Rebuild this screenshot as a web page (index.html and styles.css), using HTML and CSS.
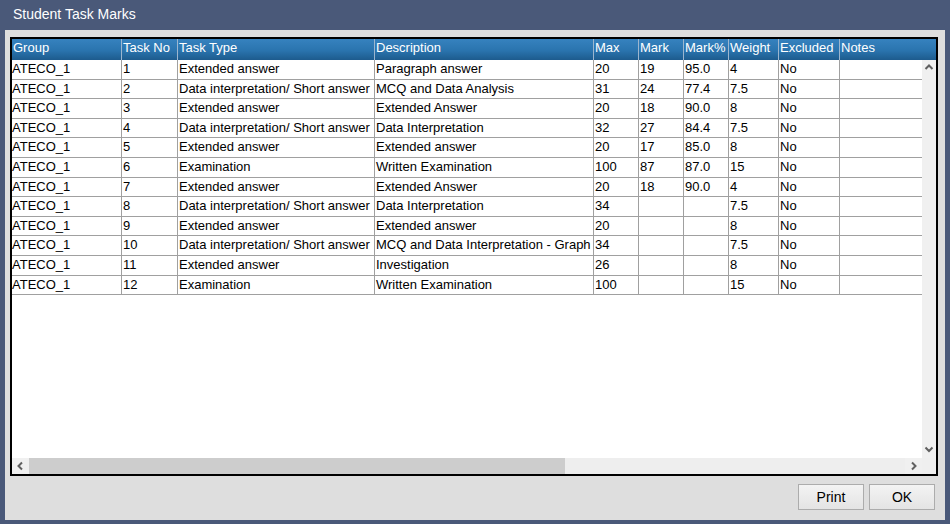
FILE: index.html
```html
<!DOCTYPE html>
<html lang="en">
<head>
    <meta charset="UTF-8" />
    <title>Student Task Marks</title>
    <link rel="stylesheet" href="styles.css">
</head>
<body>
    <div class="window">
        <div class="titlebar">Student Task Marks</div>

        <div class="client">
            <div class="gridFrame">
                <div class="gridHead">
                    <div class="hcell">Group</div>
                    <div class="hcell">Task No</div>
                    <div class="hcell">Task Type</div>
                    <div class="hcell">Description</div>
                    <div class="hcell">Max</div>
                    <div class="hcell">Mark</div>
                    <div class="hcell">Mark%</div>
                    <div class="hcell">Weight</div>
                    <div class="hcell">Excluded</div>
                    <div class="hcell">Notes</div>
                </div>

                <div class="gridBody">
                    <div class="rows">
                        <div class="row"><div class="cell">ATECO_1</div><div class="cell">1</div><div class="cell">Extended answer</div><div class="cell">Paragraph answer</div><div class="cell">20</div><div class="cell">19</div><div class="cell">95.0</div><div class="cell">4</div><div class="cell">No</div><div class="cell"></div></div>
                        <div class="row"><div class="cell">ATECO_1</div><div class="cell">2</div><div class="cell">Data interpretation/ Short answer</div><div class="cell">MCQ and Data Analysis</div><div class="cell">31</div><div class="cell">24</div><div class="cell">77.4</div><div class="cell">7.5</div><div class="cell">No</div><div class="cell"></div></div>
                        <div class="row"><div class="cell">ATECO_1</div><div class="cell">3</div><div class="cell">Extended answer</div><div class="cell">Extended Answer</div><div class="cell">20</div><div class="cell">18</div><div class="cell">90.0</div><div class="cell">8</div><div class="cell">No</div><div class="cell"></div></div>
                        <div class="row"><div class="cell">ATECO_1</div><div class="cell">4</div><div class="cell">Data interpretation/ Short answer</div><div class="cell">Data Interpretation</div><div class="cell">32</div><div class="cell">27</div><div class="cell">84.4</div><div class="cell">7.5</div><div class="cell">No</div><div class="cell"></div></div>
                        <div class="row"><div class="cell">ATECO_1</div><div class="cell">5</div><div class="cell">Extended answer</div><div class="cell">Extended answer</div><div class="cell">20</div><div class="cell">17</div><div class="cell">85.0</div><div class="cell">8</div><div class="cell">No</div><div class="cell"></div></div>
                        <div class="row"><div class="cell">ATECO_1</div><div class="cell">6</div><div class="cell">Examination</div><div class="cell">Written Examination</div><div class="cell">100</div><div class="cell">87</div><div class="cell">87.0</div><div class="cell">15</div><div class="cell">No</div><div class="cell"></div></div>
                        <div class="row"><div class="cell">ATECO_1</div><div class="cell">7</div><div class="cell">Extended answer</div><div class="cell">Extended Answer</div><div class="cell">20</div><div class="cell">18</div><div class="cell">90.0</div><div class="cell">4</div><div class="cell">No</div><div class="cell"></div></div>
                        <div class="row"><div class="cell">ATECO_1</div><div class="cell">8</div><div class="cell">Data interpretation/ Short answer</div><div class="cell">Data Interpretation</div><div class="cell">34</div><div class="cell"></div><div class="cell"></div><div class="cell">7.5</div><div class="cell">No</div><div class="cell"></div></div>
                        <div class="row"><div class="cell">ATECO_1</div><div class="cell">9</div><div class="cell">Extended answer</div><div class="cell">Extended answer</div><div class="cell">20</div><div class="cell"></div><div class="cell"></div><div class="cell">8</div><div class="cell">No</div><div class="cell"></div></div>
                        <div class="row"><div class="cell">ATECO_1</div><div class="cell">10</div><div class="cell">Data interpretation/ Short answer</div><div class="cell">MCQ and Data Interpretation - Graph analysis</div><div class="cell">34</div><div class="cell"></div><div class="cell"></div><div class="cell">7.5</div><div class="cell">No</div><div class="cell"></div></div>
                        <div class="row"><div class="cell">ATECO_1</div><div class="cell">11</div><div class="cell">Extended answer</div><div class="cell">Investigation</div><div class="cell">26</div><div class="cell"></div><div class="cell"></div><div class="cell">8</div><div class="cell">No</div><div class="cell"></div></div>
                        <div class="row"><div class="cell">ATECO_1</div><div class="cell">12</div><div class="cell">Examination</div><div class="cell">Written Examination</div><div class="cell">100</div><div class="cell"></div><div class="cell"></div><div class="cell">15</div><div class="cell">No</div><div class="cell"></div></div>
                    </div>

                    <div class="vscroll">
                        <svg class="arrow" width="14" height="14" viewBox="0 0 14 14"><polyline points="3.5,9 7,5.5 10.5,9" fill="none" stroke="#606060" stroke-width="2" /></svg>
                        <svg class="arrow" width="14" height="14" viewBox="0 0 14 14"><polyline points="3.5,5.5 7,9 10.5,5.5" fill="none" stroke="#606060" stroke-width="2" /></svg>
                    </div>
                </div>

                <div class="hscroll">
                    <div class="hbtn">
                        <svg width="17" height="16" viewBox="0 0 17 16"><polyline points="10,4.5 6.5,8 10,11.5" fill="none" stroke="#606060" stroke-width="2" /></svg>
                    </div>
                    <div class="htrack">
                        <div class="hthumb"></div>
                    </div>
                    <div class="hbtn">
                        <svg width="17" height="16" viewBox="0 0 17 16"><polyline points="7,4.5 10.5,8 7,11.5" fill="none" stroke="#606060" stroke-width="2" /></svg>
                    </div>
                    <div class="corner"></div>
                </div>
            </div>

            <div class="buttons">
                <button type="button">Print</button>
                <button type="button">OK</button>
            </div>
        </div>
    </div>
</body>
</html>
```

FILE: styles.css
```css
body {
  margin: 0;
  font-family: "Liberation Sans", Arial, sans-serif;
  background-color: #4a5979;
}

.window {
  width: 950px;
  height: 524px;
  display: flex;
  flex-direction: column;
  padding: 0 5px 4px 5px;
  box-sizing: border-box;
}

.titlebar {
  height: 30px;
  line-height: 28px;
  color: #fff;
  font-size: 14px;
  padding-left: 8px;
}

.client {
  flex: 1;
  background-color: #dedede;
  display: flex;
  flex-direction: column;
  padding: 7px 5px 0 5px;
}

.gridFrame {
  border: 2px solid #000;
  background-color: #fff;
  width: 924px;
}

.gridHead {
  display: grid;
  grid-template-columns: 109px 56px 197px 219px 45px 45px 45px 50px 61px 97px;
  height: 21px;
  background: linear-gradient(#3682bf, #2a74ae 55%, #1d5b8d);
}

.hcell {
  color: #fff;
  font-size: 13px;
  line-height: 15px;
  padding: 1px 0 0 1px;
  border-left: 1px solid #9cb6cf;
  white-space: nowrap;
  overflow: hidden;
}

.hcell:first-child {
  border-left: none;
}

.gridBody {
  display: flex;
  height: 398px;
}

.rows {
  width: 910px;
}

.row {
  display: grid;
  grid-template-columns: 109px 56px 197px 219px 45px 45px 45px 50px 61px 83px;
  height: 19.6px;
  border-bottom: 1px solid #a0a0a0;
  box-sizing: border-box;
}

.cell {
  font-size: 13px;
  line-height: 18px;
  color: #000;
  padding-left: 1px;
  border-left: 1px solid #a0a0a0;
  white-space: nowrap;
  overflow: hidden;
}

.row .cell:first-child {
  border-left: none;
  padding-left: 0;
}

.vscroll {
  width: 14px;
  background-color: #f0f0f0;
  display: flex;
  flex-direction: column;
  justify-content: space-between;
  padding: 0 0 2px 0;
}

.arrow {
  display: block;
}

.hscroll {
  display: flex;
  height: 16px;
  background-color: #efefef;
}

.hbtn {
  width: 17px;
  height: 16px;
  background-color: #f0f0f0;
}

.hbtn svg {
  display: block;
}

.htrack {
  flex: 1;
  background-color: #eeeeee;
}

.hthumb {
  width: 536px;
  height: 16px;
  background-color: #cdcdcd;
}

.corner {
  width: 14px;
}

.buttons {
  display: flex;
  justify-content: flex-end;
  gap: 5px;
  padding: 8px 5px 0 0;
}

button {
  width: 66px;
  height: 26px;
  font-family: "Liberation Sans", Arial, sans-serif;
  font-size: 14px;
  color: #000;
  background: linear-gradient(#f3f3f3, #e4e4e4);
  border: 1px solid #acacac;
  border-radius: 0;
  padding: 0;
}
```
